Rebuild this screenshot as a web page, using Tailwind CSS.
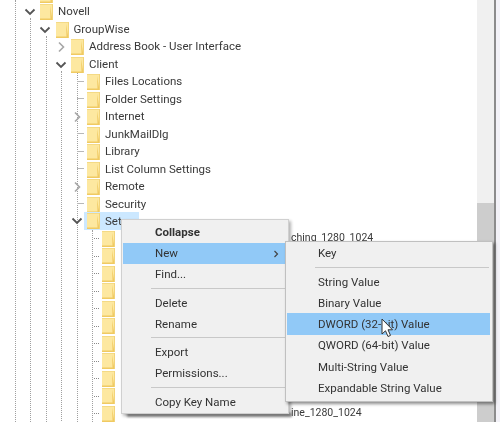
<!DOCTYPE html>
<html lang="en">
<head>
  <meta charset="UTF-8">
  <title>Registry Editor</title>
  <script src="https://cdn.jsdelivr.net/npm/@tailwindcss/browser@4"></script>
</head>
<body class="bg-white">
  <svg class="hidden">
    <symbol id="folder" viewBox="0 0 13 16">
      <rect x="0" y="0" width="13" height="16" fill="#fde8a0"/>
      <rect x="0" y="0" width="13" height="1" fill="#f4da85"/>
      <path d="M10 1.5L12 13.5V16H0V14.5H10.5Z" fill="#f0ca62"/>
      <rect x="12" y="0" width="1" height="16" fill="#f2d47a"/>
    </symbol>
    <symbol id="open" viewBox="0 0 12 8">
      <path d="M1.5 1.5L6 6L10.5 1.5" fill="none" stroke="#555" stroke-width="1.8"/>
    </symbol>
    <symbol id="closed" viewBox="0 0 12 12">
      <path d="M4 1.5L8.5 6L4 10.5" fill="none" stroke="#a6a6a6" stroke-width="1.6"/>
    </symbol>
  </svg>

  <div class="relative w-[500px] h-[422px] overflow-hidden flex font-['Roboto',sans-serif] text-[11.5px] text-[#3a3a3a] blur-[0.3px]">

    <!-- tree -->
    <div class="relative w-[477px] h-full overflow-hidden">
      <!-- dotted guides -->
      <div class="absolute left-[15px] top-0 h-full border-l border-dotted border-[#a0a0a0]"></div>
      <div class="absolute left-[30px] top-[18px] h-full border-l border-dotted border-[#a0a0a0]"></div>
      <div class="absolute left-[46px] top-[36px] h-full border-l border-dotted border-[#a0a0a0]"></div>
      <div class="absolute left-[61px] top-[71px] h-full border-l border-dotted border-[#a0a0a0]"></div>
      <div class="absolute left-[77px] top-[72px] h-full border-l border-dotted border-[#a0a0a0]"></div>
      <div class="absolute left-[92px] top-[230px] h-full border-l border-dotted border-[#a0a0a0]"></div>

      <div class="relative mt-[-15.25px]">
        <div class="flex items-center h-[17.5px] pl-[40px]"><svg class="w-[13px] h-[16px] mt-[2px]"><use href="#folder"/></svg></div>

        <div class="flex items-center h-[17.5px] pl-[22.5px]"><svg class="w-[12px] h-[8px] ml-[1px] mr-[4.5px] mt-[2px]"><use href="#open"/></svg><svg class="w-[13px] h-[16px] mt-[2px] mr-[5px]"><use href="#folder"/></svg><span class="pt-[2px]">Novell</span></div>
        <div class="flex items-center h-[17.5px] pl-[38px]"><svg class="w-[12px] h-[8px] ml-[1px] mr-[4.5px] mt-[2px]"><use href="#open"/></svg><svg class="w-[13px] h-[16px] mt-[2px] mr-[5px]"><use href="#folder"/></svg><span class="pt-[2px]">GroupWise</span></div>
        <div class="flex items-center h-[17.5px] pl-[53.5px]"><svg class="w-[12px] h-[12px] ml-[1px] mr-[4.5px] mt-[2px]"><use href="#closed"/></svg><svg class="w-[13px] h-[16px] mt-[2px] mr-[5px]"><use href="#folder"/></svg><span class="pt-[2px]">Address Book - User Interface</span></div>
        <div class="flex items-center h-[17.5px] pl-[53.5px]"><svg class="w-[12px] h-[8px] ml-[1px] mr-[4.5px] mt-[2px]"><use href="#open"/></svg><svg class="w-[13px] h-[16px] mt-[2px] mr-[5px]"><use href="#folder"/></svg><span class="pt-[2px]">Client</span></div>

        <div class="flex items-center h-[17.5px] pl-[77px]"><span class="w-[7px] border-t border-[#b8b8b8] mr-[3px]"></span><svg class="w-[13px] h-[16px] mt-[2px] mr-[5px]"><use href="#folder"/></svg><span class="pt-[2px]">Files Locations</span></div>
        <div class="flex items-center h-[17.5px] pl-[77px]"><span class="w-[7px] border-t border-[#b8b8b8] mr-[3px]"></span><svg class="w-[13px] h-[16px] mt-[2px] mr-[5px]"><use href="#folder"/></svg><span class="pt-[2px]">Folder Settings</span></div>
        <div class="flex items-center h-[17.5px] pl-[71px]"><svg class="w-[12px] h-[12px] mr-[4px] mt-[2px]"><use href="#closed"/></svg><svg class="w-[13px] h-[16px] mt-[2px] mr-[5px]"><use href="#folder"/></svg><span class="pt-[2px]">Internet</span></div>
        <div class="flex items-center h-[17.5px] pl-[77px]"><span class="w-[7px] border-t border-[#b8b8b8] mr-[3px]"></span><svg class="w-[13px] h-[16px] mt-[2px] mr-[5px]"><use href="#folder"/></svg><span class="pt-[2px]">JunkMailDlg</span></div>
        <div class="flex items-center h-[17.5px] pl-[77px]"><span class="w-[7px] border-t border-[#b8b8b8] mr-[3px]"></span><svg class="w-[13px] h-[16px] mt-[2px] mr-[5px]"><use href="#folder"/></svg><span class="pt-[2px]">Library</span></div>
        <div class="flex items-center h-[17.5px] pl-[77px]"><span class="w-[7px] border-t border-[#b8b8b8] mr-[3px]"></span><svg class="w-[13px] h-[16px] mt-[2px] mr-[5px]"><use href="#folder"/></svg><span class="pt-[2px]">List Column Settings</span></div>
        <div class="flex items-center h-[17.5px] pl-[71px]"><svg class="w-[12px] h-[12px] mr-[4px] mt-[2px]"><use href="#closed"/></svg><svg class="w-[13px] h-[16px] mt-[2px] mr-[5px]"><use href="#folder"/></svg><span class="pt-[2px]">Remote</span></div>
        <div class="flex items-center h-[17.5px] pl-[77px]"><span class="w-[7px] border-t border-[#b8b8b8] mr-[3px]"></span><svg class="w-[13px] h-[16px] mt-[2px] mr-[5px]"><use href="#folder"/></svg><span class="pt-[2px]">Security</span></div>

        <div class="flex items-center h-[17.5px] pl-[71px]"><svg class="w-[12px] h-[8px] mr-[1px]"><use href="#open"/></svg><span class="flex items-center h-[17.5px] w-[55px] pl-[3px] bg-[#cce8ff]"><svg class="w-[13px] h-[16px] mr-[5px]"><use href="#folder"/></svg><span class="pt-[2px]">Set</span></span></div>

        <div class="flex items-center h-[17.5px] pl-[94px]"><span class="w-[5px] border-t border-dotted border-[#8a8a8a] mr-[3px]"></span><svg class="w-[13px] h-[16px]"><use href="#folder"/></svg><span class="ml-[176px] leading-none text-[10.5px]">ching_1280_1024</span></div>
        <div class="flex items-center h-[17.5px] pl-[94px]"><span class="w-[5px] border-t border-dotted border-[#8a8a8a] mr-[3px]"></span><svg class="w-[13px] h-[16px]"><use href="#folder"/></svg></div>
        <div class="flex items-center h-[17.5px] pl-[94px]"><span class="w-[5px] border-t border-dotted border-[#8a8a8a] mr-[3px]"></span><svg class="w-[13px] h-[16px]"><use href="#folder"/></svg></div>
        <div class="flex items-center h-[17.5px] pl-[94px]"><span class="w-[5px] border-t border-dotted border-[#8a8a8a] mr-[3px]"></span><svg class="w-[13px] h-[16px]"><use href="#folder"/></svg></div>
        <div class="flex items-center h-[17.5px] pl-[94px]"><span class="w-[5px] border-t border-dotted border-[#8a8a8a] mr-[3px]"></span><svg class="w-[13px] h-[16px]"><use href="#folder"/></svg></div>
        <div class="flex items-center h-[17.5px] pl-[94px]"><span class="w-[5px] border-t border-dotted border-[#8a8a8a] mr-[3px]"></span><svg class="w-[13px] h-[16px]"><use href="#folder"/></svg></div>
        <div class="flex items-center h-[17.5px] pl-[94px]"><span class="w-[5px] border-t border-dotted border-[#8a8a8a] mr-[3px]"></span><svg class="w-[13px] h-[16px]"><use href="#folder"/></svg></div>
        <div class="flex items-center h-[17.5px] pl-[94px]"><span class="w-[5px] border-t border-dotted border-[#8a8a8a] mr-[3px]"></span><svg class="w-[13px] h-[16px]"><use href="#folder"/></svg></div>
        <div class="flex items-center h-[17.5px] pl-[94px]"><span class="w-[5px] border-t border-dotted border-[#8a8a8a] mr-[3px]"></span><svg class="w-[13px] h-[16px]"><use href="#folder"/></svg></div>
        <div class="flex items-center h-[17.5px] pl-[94px]"><span class="w-[5px] border-t border-dotted border-[#8a8a8a] mr-[3px]"></span><svg class="w-[13px] h-[16px]"><use href="#folder"/></svg></div>
        <div class="flex items-center h-[17.5px] pl-[94px]"><span class="w-[5px] border-t border-dotted border-[#8a8a8a] mr-[3px]"></span><svg class="w-[13px] h-[16px]"><use href="#folder"/></svg><span class="ml-[176px] leading-none text-[10.5px]">ine_1280_1024</span></div>
      </div>
      <div class="absolute left-[127px] top-[413px] w-[165px] h-[4px] bg-[#6f6f6f]/70 blur-[1px]"></div>
    </div>

    <!-- scrollbar and window edge -->
    <div class="w-[17px] h-full bg-[#f0f0f0] flex flex-col">
      <div class="h-[203px]"></div>
      <div class="flex-1 bg-[#cdcdcd]"></div>
    </div>
    <div class="w-[2px] h-full bg-[#8c8c8c]"></div>
    <div class="w-[4px] h-full bg-[#f3f2f8]"></div>

    <!-- context menu -->
    <div class="absolute left-[121px] top-[219px] w-[168px] h-[195px] bg-[#f0f0f0] border border-[#d0d0d0] shadow-[2px_2px_3px_rgba(0,0,0,0.3)] pt-[1.5px] px-[1px] text-[#333]">
      <div class="h-[21px] pl-[32px] pt-[2px] flex items-center font-bold">Collapse</div>
      <div class="h-[21px] pl-[32px] pt-[2px] flex items-center justify-between bg-[#91c9f7] pr-[8px]"><span>New</span><svg class="w-[6px] h-[8px]" viewBox="0 0 6 8"><path d="M1.5 1L4.5 4L1.5 7" fill="none" stroke="#444" stroke-width="1.2"/></svg></div>
      <div class="h-[21px] pl-[32px] pt-[2px] flex items-center">Find...</div>
      <div class="ml-[28px] my-[3.25px] border-t border-[#c8c8c8]"></div>
      <div class="h-[21px] pl-[32px] pt-[2px] flex items-center">Delete</div>
      <div class="h-[21px] pl-[32px] pt-[2px] flex items-center">Rename</div>
      <div class="ml-[28px] my-[3.25px] border-t border-[#c8c8c8]"></div>
      <div class="h-[21px] pl-[32px] pt-[2px] flex items-center">Export</div>
      <div class="h-[21px] pl-[32px] pt-[2px] flex items-center">Permissions...</div>
      <div class="ml-[28px] my-[3.25px] border-t border-[#c8c8c8]"></div>
      <div class="h-[21px] pl-[32px] pt-[2px] flex items-center">Copy Key Name</div>
    </div>

    <!-- submenu -->
    <div class="absolute left-[285px] top-[241px] w-[208px] h-[161px] bg-[#f0f0f0] border border-[#c0c0c0] shadow-[2px_2px_3px_rgba(0,0,0,0.45)] px-[1px] text-[#333]">
      <div class="h-[21px] pl-[31px] pt-[2px] flex items-center">Key</div>
      <div class="ml-[28px] mr-[2px] my-[3.5px] border-t border-[#c8c8c8]"></div>
      <div class="h-[21px] pl-[31px] pt-[2px] flex items-center">String Value</div>
      <div class="h-[21px] pl-[31px] pt-[2px] flex items-center">Binary Value</div>
      <div class="h-[21.5px] pl-[31px] pt-[2px] flex items-center bg-[#91c9f7] mr-[1px]">DWORD (32-bit) Value</div>
      <div class="h-[21px] pl-[31px] pt-[2px] flex items-center">QWORD (64-bit) Value</div>
      <div class="h-[21.5px] pl-[31px] pt-[2px] flex items-center">Multi-String Value</div>
      <div class="h-[21px] pl-[31px] pt-[2px] flex items-center">Expandable String Value</div>
    </div>

    <!-- mouse pointer -->
    <svg class="absolute left-[381px] top-[318px] w-[13px] h-[20px]" viewBox="0 0 13 20">
      <path d="M1 1V16L4.5 12.8L7 18.5L9.5 17.4L7 11.8H11.5Z" fill="#fff" stroke="#333" stroke-width="1"/>
    </svg>
  </div>
</body>
</html>
